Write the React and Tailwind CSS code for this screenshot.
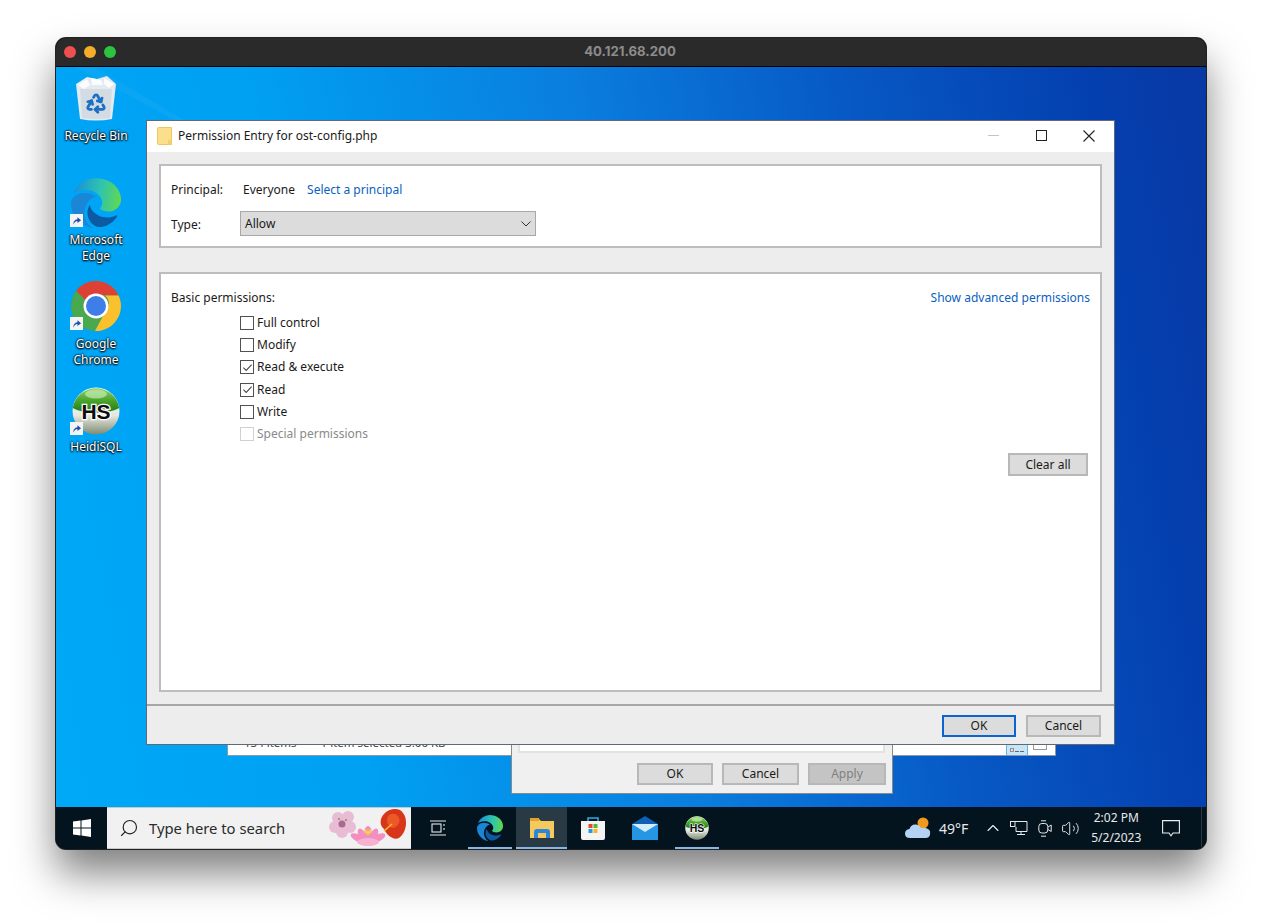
import React from 'react';
import { Recycle, ChevronUp, Volume2, Search } from 'lucide-react';

// shortcut arrow badge on desktop icons
const ShortcutBadge = ({ className }) => (
  <div className={`absolute w-[13px] h-[13px] bg-[#f4f4f4] flex items-center justify-center ${className}`}>
    <svg viewBox="0 0 12 12" className="w-[11px] h-[11px]">
      <path d="M2.5 10.5C2.5 7 4 5 7 4.6V2.5L11 5.6 7 8.6V6.5C5 6.6 3.6 8 2.5 10.5Z" fill="#1f4fa8" />
    </svg>
  </div>
);

const EdgeIcon = ({ size = 50 }) => (
  <svg viewBox="0 0 24 24" width={size} height={size}>
    <defs>
      <linearGradient id="edgeTop" x1="0" y1="0.5" x2="1" y2="0.6">
        <stop offset="0" stopColor="#1a8fd8" />
        <stop offset="0.55" stopColor="#2ec4b0" />
        <stop offset="1" stopColor="#62d84e" />
      </linearGradient>
    </defs>
    <path fill="#0c59a4" d="M21.86 17.86q.14 0 .25.12.1.13.1.25t-.11.33l-.32.46-.43.53-.44.5q-.21.25-.38.42l-.22.23q-.58.53-1.34 1.04-.76.51-1.6.91-.86.4-1.74.64t-1.67.24q-.9 0-1.69-.28-.8-.28-1.48-.78-.68-.5-1.22-1.17-.53-.66-.92-1.44-.38-.77-.58-1.6-.2-.83-.2-1.67 0-1 .32-1.96.33-.97.87-1.8.14.95.55 1.77.41.82 1.02 1.5.6.68 1.38 1.21.78.54 1.64.9.86.36 1.77.56.92.2 1.8.2 1.12 0 2.18-.24 1.06-.23 2.06-.72l.2-.1.2-.05z" />
    <path fill="#1b86d6" d="M6.36 16.59q0 1.1.27 2.15.27 1.06.78 2.03.51.96 1.24 1.77.74.82 1.66 1.4-1.47-.2-2.8-.74-1.33-.55-2.48-1.37-1.15-.83-2.08-1.9-.92-1.07-1.58-2.33T.36 14.94Q0 13.54 0 12.06q0-.81.32-1.49.31-.68.83-1.23.53-.55 1.2-.96.66-.4 1.35-.66.74-.27 1.5-.39.78-.12 1.55-.12.7 0 1.42.1.72.12 1.4.35.68.23 1.32.57.63.35 1.16.83-.35 0-.7.07-.33.07-.65.23v-.02q-.63.28-1.2.74-.57.46-1.05 1.04-.48.58-.87 1.26-.38.67-.65 1.39-.27.71-.42 1.44-.15.72-.15 1.38z" />
    <path fill="url(#edgeTop)" d="M11.96.06q1.7 0 3.33.39 1.63.38 3.07 1.15 1.43.77 2.62 1.93 1.18 1.16 1.98 2.7.49.94.76 1.96.28 1 .28 2.08 0 .89-.23 1.7-.24.8-.69 1.48-.45.68-1.1 1.22-.64.53-1.45.88-.54.24-1.11.36-.58.13-1.16.13-.42 0-.97-.03-.54-.03-1.1-.12-.55-.09-1.05-.28-.5-.19-.84-.5-.12-.09-.23-.24-.1-.16-.1-.33 0-.15.16-.35.16-.2.35-.5.2-.28.36-.68.16-.4.16-.95 0-1.06-.4-1.96-.4-.91-1.06-1.64-.66-.74-1.52-1.28-.86-.55-1.79-.89-.84-.3-1.72-.44-.87-.14-1.76-.14-1.55 0-3.06.45T.94 7.55q.71-1.74 1.81-3.13 1.1-1.38 2.52-2.35Q6.68 1.1 8.37.58q1.7-.52 3.58-.52Z" />
  </svg>
);

const ChromeIcon = () => (
  <svg viewBox="0 0 50 50" width="50" height="50">
    <circle cx="25" cy="25" r="25" fill="#4aa84f" />
    <path d="M25 0A25 25 0 0 1 47.6 14.5H25A10.5 10.5 0 0 0 15.6 20.3L5.2 9.8A25 25 0 0 1 25 0Z" fill="#dd4035" />
    <path d="M47.6 14.5A25 25 0 0 1 24 50L34.4 30.5A10.5 10.5 0 0 0 34 14.5Z" fill="#fbc02d" />
    <circle cx="25" cy="25" r="12.5" fill="#fff" />
    <circle cx="25" cy="25" r="10" fill="#3f7de8" />
  </svg>
);

const HeidiIcon = ({ size = 48, id = 'heidi' }) => (
  <svg viewBox="0 0 48 48" width={size} height={size}>
    <defs>
      <linearGradient id={`${id}Top`} x1="0" y1="0" x2="0" y2="1">
        <stop offset="0" stopColor="#8fd06a" />
        <stop offset="0.5" stopColor="#4aa52c" />
        <stop offset="1" stopColor="#1f7a18" />
      </linearGradient>
      <linearGradient id={`${id}Low`} x1="0" y1="0" x2="0" y2="1">
        <stop offset="0" stopColor="#ffffff" />
        <stop offset="0.6" stopColor="#e4e8de" />
        <stop offset="1" stopColor="#7f8a74" />
      </linearGradient>
    </defs>
    <circle cx="24" cy="24" r="23.5" fill={`url(#${id}Low)`} />
    <path d="M0.8 21A23.5 23.5 0 0 1 47.2 21C38 27 10 27 0.8 21Z" fill={`url(#${id}Top)`} />
    <ellipse cx="24" cy="7" rx="11" ry="4.5" fill="#c4ebb0" opacity="0.7" />
    <text x="24" y="32" textAnchor="middle" fontFamily="'Liberation Sans', sans-serif" fontWeight="700" fontSize="21" fill="#0d0d0d" stroke="#ffffff" strokeWidth="2.5" paintOrder="stroke">HS</text>
  </svg>
);

const BinIcon = () => (
  <div className="relative w-[42px] h-[46px]">
    <svg viewBox="0 0 42 46" width="42" height="46">
      <path d="M1 9 12 2 22 4 32 1 41 9 37 44Q21 47 5 44Z" fill="#e4eaf0" />
      <path d="M3 10 12 4 15 10 9 14ZM16 3 26 5 28 10 17 10ZM29 3 39 9 34 13 29 9Z" fill="#fafcfd" />
      <path d="M5 14H37L35 43Q21 45 7 43Z" fill="#cfd8e0" opacity="0.8" />
    </svg>
    <Recycle className="absolute left-[10px] top-[17px] text-[#1c6fc4]" size={22} strokeWidth={3} />
  </div>
);

const DesktopIcon = ({ icon, label, className }) => (
  <div className={`flex flex-col items-center w-[80px] ${className}`}>
    {icon}
    <div className="mt-[4px] text-center text-white text-[12px] leading-[16px] [text-shadow:0_0_2px_#000,0_0_2px_#000,0_1px_2px_#000]">
      {label}
    </div>
  </div>
);

const CheckRow = ({ label, checked, disabled }) => (
  <div className="h-[22.2px] flex items-center gap-[3px]">
    <div className={`w-[14px] h-[14px] border-[1.5px] flex items-center justify-center bg-white ${disabled ? 'border-[#d0d0d0]' : 'border-[#505050]'}`}>
      {checked && (
        <svg viewBox="0 0 12 12" className="w-[11px] h-[11px]">
          <path d="M1.5 6.2 4.6 9.2 10.5 2.8" fill="none" stroke="#444444" strokeWidth="1.1" />
        </svg>
      )}
    </div>
    <span className={disabled ? 'text-[#8a8a8a]' : 'text-[#1a1a1a]'}>{label}</span>
  </div>
);

const WinButton = ({ children, className = 'bg-[#dcdcdc] border-[#b8b8b8] text-[#1a1a1a]' , size = '' }) => (
  <button className={`flex items-center justify-center border-2 text-[12px] ${size || 'h-[22px]'} ${className}`}>
    {children}
  </button>
);

const Flowers = () => (
  <svg viewBox="0 0 80 40" width="80" height="40">
    <g fill="#e8bcd4">
      <circle cx="10" cy="10" r="6" /><circle cx="20" cy="9" r="6" /><circle cx="7" cy="19" r="6" />
      <circle cx="22" cy="19" r="6" /><circle cx="14" cy="24" r="6" />
    </g>
    <circle cx="14" cy="16" r="3.5" fill="#a86a90" />
    <circle cx="11" cy="11" r="1" fill="#8a9040" /><circle cx="18" cy="12" r="1" fill="#8a9040" />
    <g fill="#f190c0">
      <ellipse cx="30" cy="30" rx="8" ry="3.5" transform="rotate(25 30 30)" />
      <ellipse cx="50" cy="30" rx="8" ry="3.5" transform="rotate(-25 50 30)" />
      <ellipse cx="34" cy="27" rx="3.5" ry="7" transform="rotate(-25 34 27)" />
      <ellipse cx="46" cy="27" rx="3.5" ry="7" transform="rotate(25 46 27)" />
      <ellipse cx="40" cy="26" rx="4" ry="8" />
    </g>
    <ellipse cx="40" cy="34" rx="11" ry="4" fill="#f6b0d0" />
    <path d="M36 24 38 21 40 23.5 42 21 44 24 40 27Z" fill="#f8d040" />
    <path d="M56 6C61 0 72 -1 75 5 80 11 79 24 71 30 65 33 58 26 56 21 51 17 52 10 56 6Z" fill="#d8361a" />
    <path d="M60 8C64 4 70 6 71 10 73 14 69 20 64 20 59 18 58 12 60 8Z" fill="#ec5826" />
    <path d="M56 23 64 16" stroke="#f4c030" strokeWidth="1.6" />
  </svg>
);

const TaskIcon = ({ children, active, underline, className = '' }) => (
  <div className={`relative h-full flex items-center justify-center ${active ? 'bg-[#2a3a44]' : ''} ${className}`}>
    {children}
    {underline && <div className={`absolute bottom-0 h-[2px] bg-[#86b6e6] ${active ? 'inset-x-0' : 'inset-x-[4px]'}`} />}
  </div>
);

export default function App() {
  return (
    <div className="w-[1262px] h-[923px] bg-white overflow-hidden pt-[38px] pl-[56px] font-['Noto_Sans',sans-serif]">
      {/* mac remote desktop window */}
      <div className="w-[1150px] h-[811px] rounded-[10px] ring-1 ring-[#222222] shadow-[0_24px_40px_rgba(0,0,0,0.5)] overflow-hidden flex flex-col bg-black">
        <div className="relative h-[29px] shrink-0 bg-[#2a2a2a] border-b border-black flex items-center pl-[8px] gap-[8px]">
          <div className="w-[12px] h-[12px] rounded-full bg-[#ee4f4f]" />
          <div className="w-[12px] h-[12px] rounded-full bg-[#f5ac2a]" />
          <div className="w-[12px] h-[12px] rounded-full bg-[#2cc33e]" />
          <div className="flex-1 text-center pr-[70px] text-[#8c8c8c] text-[13.2px] font-bold font-['Inter',sans-serif]">40.121.68.200</div>
        </div>

        {/* desktop */}
        <div className="relative flex-1 bg-[linear-gradient(80deg,#00a8f8_0%,#00a0f2_25%,#0a7ede_50%,#0758c4_72%,#0440b0_90%,#0838a4_100%)]">
          {/* light beam of the wallpaper */}
          <svg viewBox="0 0 200 60" width="200" height="60" className="absolute left-0 top-0">
            <path d="M38 0 130 54 120 54 20 0Z" fill="#ffffff" opacity="0.04" />
          </svg>

          <DesktopIcon className="absolute left-0 top-[8px]" icon={<BinIcon />} label={<span className="relative top-[3px]">Recycle Bin</span>} />
          <DesktopIcon
            className="absolute left-0 top-[111px]"
            icon={<div className="relative h-[50px]"><EdgeIcon /><ShortcutBadge className="left-[-1px] bottom-[1px]" /></div>}
            label={<>Microsoft<br />Edge</>}
          />
          <DesktopIcon
            className="absolute left-0 top-[214px]"
            icon={<div className="relative h-[50px] mb-[1px]"><ChromeIcon /><ShortcutBadge className="left-[-1px] bottom-[1px]" /></div>}
            label={<>Google<br />Chrome</>}
          />
          <DesktopIcon
            className="absolute left-0 top-[320px]"
            icon={<div className="relative h-[48px]"><HeidiIcon /><ShortcutBadge className="left-[-2px] bottom-[0px]" /></div>}
            label="HeidiSQL"
          />

          {/* explorer window behind */}
          <div className="absolute left-[171px] top-[600px] w-[829px] h-[89px] bg-white border-x border-b border-[#8a9aa8] flex items-end">
            <div className="h-[18px] flex-1 flex items-start text-[11.5px] text-[#444444] pl-[16px] gap-[24px] leading-[12px]">
              <span>134 items</span>
              <span>1 item selected 3.00 KB</span>
            </div>
            <div className="w-[22px] h-[11px] bg-[#c4e6f8] border-x border-[#6fb4dc] flex items-end justify-center pb-[3px] gap-[1px]">
              <div className="w-[4px] h-[4px] border border-[#a88a8a]" />
              <div className="w-[4px] h-px bg-[#666666]" />
              <div className="w-[4px] h-px bg-[#666666]" />
            </div>
            <div className="w-[14px] h-[6px] ml-[5px] mb-[5px] border border-[#9a9a9a] mr-[8px]" />
          </div>

          {/* file properties dialog behind */}
          <div className="absolute left-[455px] top-[560px] w-[382px] h-[167px] bg-[#f0f0f0] border-x border-b border-[#8a8a8a] flex flex-col justify-end">
            <div className="ml-[6px] mr-[7px] h-[20px] bg-white border-x-2 border-b-2 border-[#e2e2e2]" />
            <div className="flex justify-end gap-[9px] pt-[10px] pb-[8px] pr-[6px]">
              <WinButton size="h-[22px] w-[76px]">OK</WinButton>
              <WinButton size="h-[22px] w-[77px]">Cancel</WinButton>
              <WinButton size="h-[22px] w-[78px]" className="bg-[#c4c4c4] border-[#b8b8b8] text-[#808080]">Apply</WinButton>
            </div>
          </div>

          {/* permission entry dialog */}
          <div className="absolute left-[90px] top-[53px] w-[969px] h-[625px] bg-[#ededed] border border-[#5f6a74] flex flex-col text-[12px] text-[#1a1a1a]">
            <div className="h-[31px] shrink-0 bg-white flex items-center pl-[10px] pb-[1px]">
              <svg viewBox="0 0 15 18" width="15" height="18" className="mr-[6px]">
                <path d="M0.5 1.5Q0.5 0.5 1.5 0.5H14.5V17.5H1.5Q0.5 17.5 0.5 16.5Z" fill="#fbdf8a" stroke="#efc75e" />
                <path d="M11 13H14.5V17.5H11Z" fill="#f4cf6e" />
              </svg>
              <span>Permission Entry for ost-config.php</span>
              <div className="ml-auto flex items-center h-full pb-[1px] pr-[1px]">
                <div className="w-[48px] flex justify-center"><div className="w-[11px] h-px bg-[#c4c4c4]" /></div>
                <div className="w-[48px] flex justify-center"><div className="w-[11px] h-[11px] border-[1.5px] border-[#222222]" /></div>
                <div className="w-[48px] flex justify-center">
                  <svg viewBox="0 0 12 12" width="12" height="12"><path d="M0.5 0.5 11.5 11.5M11.5 0.5 0.5 11.5" stroke="#222222" strokeWidth="1.1" /></svg>
                </div>
              </div>
            </div>

            <div className="flex-1 flex flex-col gap-[24px] px-[12px] pt-[12px] pb-[12px] border-b-2 border-[#a6a6a6]">
              <div className="h-[84px] shrink-0 bg-white border-2 border-[#bdbdbd] px-[10px] pt-[14px]">
                <div className="h-[20px] flex items-center">
                  <span className="w-[72px]">Principal:</span>
                  <span>Everyone</span>
                  <a className="ml-[12px] text-[#0a5fc4]">Select a principal</a>
                </div>
                <div className="mt-[11px] flex items-center">
                  <span className="w-[69px] pt-[2px]">Type:</span>
                  <div className="w-[296px] h-[25px] bg-[#dcdcdc] border-[1.5px] border-[#a8a8a8] flex items-center pl-[4px] pr-[3px]">
                    <span className="pt-[1px]">Allow</span>
                    <svg viewBox="0 0 10 6" width="10" height="6" className="ml-auto mr-[1px]"><path d="M0.5 0.5 5 5 9.5 0.5" fill="none" stroke="#333333" /></svg>
                  </div>
                </div>
              </div>

              <div className="flex-1 bg-white border-2 border-[#bdbdbd] px-[10px] pt-[14px]">
                <div className="h-[20px] flex items-center justify-between">
                  <span>Basic permissions:</span>
                  <a className="text-[#0a5fc4]">Show advanced permissions</a>
                </div>
                <div className="mt-[4px] pl-[69px]">
                  <CheckRow label="Full control" />
                  <CheckRow label="Modify" />
                  <CheckRow label="Read & execute" checked />
                  <CheckRow label="Read" checked />
                  <CheckRow label="Write" />
                  <CheckRow label="Special permissions" disabled />
                </div>
                <div className="flex justify-end mt-[8px] pr-[2px]">
                  <WinButton size="w-[80px] h-[23px]">Clear all</WinButton>
                </div>
              </div>
            </div>

            <div className="h-[38px] shrink-0 flex items-start justify-end gap-[10px] pt-[9px] pr-[13px]">
              <WinButton size="h-[22px] w-[74px]" className="bg-[#dcdcdc] border-[#0a64d2] text-[#1a1a1a]">OK</WinButton>
              <WinButton size="h-[22px] w-[75px]">Cancel</WinButton>
            </div>
          </div>
        </div>

        {/* taskbar */}
        <div className="h-[42px] shrink-0 bg-[#03141f] flex items-center text-white">
          <div className="w-[51px] h-full flex items-center justify-center">
            <svg viewBox="0 0 18 18" width="18" height="18">
              <path d="M0 2.6 7.5 1.5V8.4H0ZM8.5 1.4 18 0V8.4H8.5ZM0 9.4H7.5V16.4L0 15.4ZM8.5 9.4H18V18L8.5 16.6Z" fill="#ffffff" />
            </svg>
          </div>
          <div className="w-[304px] h-full bg-[#f1f1f1] border-y border-[#c8c8c8] flex items-center pl-[12px] text-[#2b2b2b] text-[14.8px]">
            <Search size={20} strokeWidth={1.4} className="-scale-x-100 mr-[10px] text-[#222222]" />
            <span>Type here to search</span>
            <div className="ml-auto mr-[3px]"><Flowers /></div>
          </div>
          <TaskIcon className="w-[53px]">
            <svg viewBox="0 0 18 16" width="18" height="16" fill="none" stroke="#e8e8e8" strokeWidth="1.1">
              <path d="M1 1H17M1 15H17" /><rect x="3" y="4" width="9" height="8" /><path d="M15 4V6M15 8V10" />
            </svg>
          </TaskIcon>
          <TaskIcon className="w-[52px]" underline><EdgeIcon size={26} /></TaskIcon>
          <TaskIcon className="w-[51px]" active underline>
            <svg viewBox="0 0 24 22" width="24" height="22">
              <path d="M0 2H9L11 4H24V21H0Z" fill="#f4c95e" />
              <path d="M0 1H9V4H0Z" fill="#e6a12a" />
              <path d="M4 21V15Q4 12 7 12H17Q20 12 20 15V21H16V16H8V21Z" fill="#2f86d8" />
            </svg>
          </TaskIcon>
          <TaskIcon className="w-[52px]">
            <svg viewBox="0 0 26 26" width="26" height="26">
              <path d="M8 6V3H18V6" fill="none" stroke="#31a8e0" strokeWidth="1.6" />
              <path d="M1 6H25V23Q25 25 23 25H3Q1 25 1 23Z" fill="#f4f4f4" />
              <rect x="8.5" y="9" width="4" height="4" fill="#e8452c" />
              <rect x="13.5" y="9" width="4" height="4" fill="#5cb531" />
              <rect x="8.5" y="14" width="4" height="4" fill="#1f9be0" />
              <rect x="13.5" y="14" width="4" height="4" fill="#f8b81c" />
            </svg>
          </TaskIcon>
          <TaskIcon className="w-[52px]">
            <svg viewBox="0 0 26 24" width="26" height="24">
              <path d="M0 8 13 0 26 8Z" fill="#0f5fb4" />
              <path d="M0 8H26V24H0Z" fill="#2596e4" />
              <path d="M0 8H26L13 16Z" fill="#d4ecfa" />
            </svg>
          </TaskIcon>
          <TaskIcon className="w-[52px]" underline><HeidiIcon size={24} id="heidiTask" /></TaskIcon>

          {/* tray */}
          <div className="flex items-center h-full ml-[182px]">
            <svg viewBox="0 0 26 22" width="26" height="22">
              <circle cx="18" cy="6" r="5.5" fill="#f39a1e" />
              <path d="M5 21Q0 21 0 16.5 0 12.5 4.5 12 6 7 11 7.5 15 8 16 11 22 10 25 14 26 21 21 21Z" fill="#b4d2f2" />
            </svg>
            <span className="ml-[8px] text-[14px] text-[#e8e8e8]">49°F</span>
            <ChevronUp size={20} strokeWidth={1.3} className="ml-[15px] text-[#eeeeee]" />
            <svg viewBox="0 0 18 16" width="18" height="16" className="ml-[7px]" fill="none" stroke="#e8e8e8" strokeWidth="1">
              <path d="M5 1.5H17V11.5H6V7" /><path d="M11 11.5V14.5M7 14.5H15" /><rect x="0.5" y="1.5" width="4.5" height="5" fill="#03141f" />
            </svg>
            <svg viewBox="0 0 14 17" width="14" height="17" className="ml-[10px]" fill="none" stroke="#e8e8e8" strokeWidth="1">
              <path d="M3 0.8H8M3 16.2H8" /><rect x="0.8" y="3.5" width="9" height="9.5" rx="3" /><path d="M10 7 13.2 5V11.5L10 9.5" />
            </svg>
            <Volume2 size={19} strokeWidth={1.2} className="ml-[9px] text-[#e8e8e8]" />
            <div className="ml-[11px] w-[50px] text-center text-[12px] leading-[20px] text-[#e8e8e8] whitespace-nowrap flex flex-col items-center">
              <span>2:02 PM</span>
              <span>5/2/2023</span>
            </div>
            <svg viewBox="0 0 18 17" width="18" height="17" className="ml-[21px]" fill="none" stroke="#eeeeee" strokeWidth="1.1">
              <path d="M0.6 0.6H17.4V13H11L9 15.8 7 13H0.6Z" />
            </svg>
            <div className="ml-[21px] w-px h-full bg-[#2a3a44]" />
          </div>
        </div>
      </div>
    </div>
  );
}
